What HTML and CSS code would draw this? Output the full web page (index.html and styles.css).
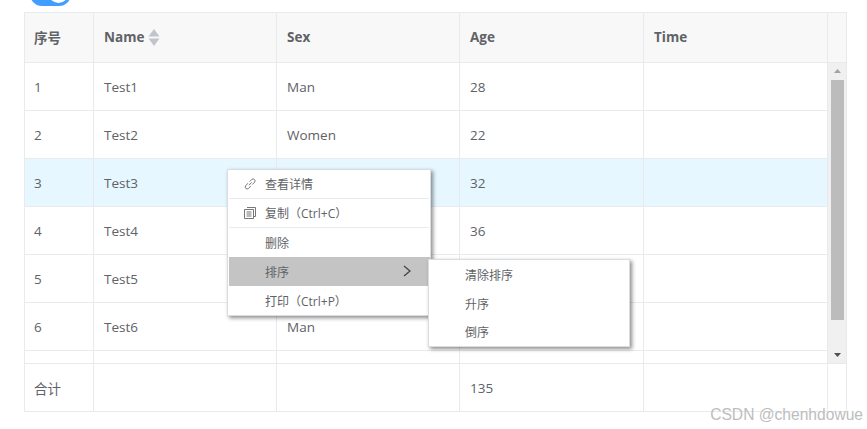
FILE: index.html
```html
<!DOCTYPE html>
<html lang="zh">
<head>
<meta charset="utf-8">
<title>Table</title>
<link rel="stylesheet" href="styles.css">
</head>
<body>
<div class="page">
  <div class="switch"><span class="knob"></span></div>
  <div class="table">
    <div class="row head">
      <div class="cell">序号</div>
      <div class="cell name">Name
        <svg class="sort" width="12" height="17" viewBox="0 0 12 17"><path d="M6 0 L11.5 7.5 H0.5 Z" fill="#c0c4cc"/><path d="M0.5 9.5 H11.5 L6 17 Z" fill="#c0c4cc"/></svg>
      </div>
      <div class="cell">Sex</div>
      <div class="cell">Age</div>
      <div class="cell">Time</div>
      <div class="cell"></div>
    </div>
    <div class="middle">
      <div class="rows">
        <div class="row data"><div class="cell">1</div><div class="cell">Test1</div><div class="cell">Man</div><div class="cell">28</div><div class="cell"></div></div>
        <div class="row data"><div class="cell">2</div><div class="cell">Test2</div><div class="cell">Women</div><div class="cell">22</div><div class="cell"></div></div>
        <div class="row data current"><div class="cell">3</div><div class="cell">Test3</div><div class="cell"></div><div class="cell">32</div><div class="cell"></div></div>
        <div class="row data"><div class="cell">4</div><div class="cell">Test4</div><div class="cell"></div><div class="cell">36</div><div class="cell"></div></div>
        <div class="row data"><div class="cell">5</div><div class="cell">Test5</div><div class="cell"></div><div class="cell"></div><div class="cell"></div></div>
        <div class="row data"><div class="cell">6</div><div class="cell">Test6</div><div class="cell">Man</div><div class="cell"></div><div class="cell"></div></div>
        <div class="row spacer"><div class="cell"></div><div class="cell"></div><div class="cell"></div><div class="cell"></div><div class="cell"></div></div>
      </div>
      <div class="scrollbar">
        <svg class="arrow" width="7" height="4" viewBox="0 0 7 4"><path d="M3.5 0 L7 4 H0 Z" fill="#a3a3a3"/></svg>
        <div class="thumb"></div>
        <svg class="arrow" width="7" height="4" viewBox="0 0 7 4"><path d="M0 0 H7 L3.5 4 Z" fill="#505050"/></svg>
      </div>
    </div>
    <div class="row foot">
      <div class="cell">合计</div><div class="cell"></div><div class="cell"></div><div class="cell">135</div><div class="cell"></div><div class="cell"></div>
    </div>
  </div>

  <div class="menu main-menu">
    <div class="item sep">
      <svg class="ico" width="14" height="14" viewBox="0 0 14 14" fill="none" stroke="#777" stroke-width="1"><path d="M6 8.2 L8.6 5.4 M5 6.2 L2.6 8.8 a2 2 0 0 0 2.9 2.7 L7.8 9 M6.6 4.6 L8.8 2.4 a2 2 0 0 1 2.9 2.7 L9.2 7.6"/></svg>
      <span>查看详情</span>
    </div>
    <div class="item sep">
      <svg class="ico" width="14" height="14" viewBox="0 0 14 14" fill="none" stroke="#777" stroke-width="1"><path d="M4 1.5 H12.5 V10.5 H10.5 M1.5 3.5 H10.5 V12.5 H1.5 Z M3.5 6 H8.5 M3.5 8 H8.5 M3.5 10 H8.5"/></svg>
      <span>复制（Ctrl+C）</span>
    </div>
    <div class="item"><span class="ico-gap"></span><span>删除</span></div>
    <div class="item active"><span class="ico-gap"></span><span>排序</span>
      <svg class="chev" width="8" height="12" viewBox="0 0 8 12" fill="none" stroke="#444" stroke-width="1.3"><path d="M1 1 L7 6 L1 11"/></svg>
    </div>
    <div class="item"><span class="ico-gap"></span><span>打印（Ctrl+P）</span></div>
  </div>

  <div class="menu sub-menu">
    <div class="item"><span>清除排序</span></div>
    <div class="item"><span>升序</span></div>
    <div class="item"><span>倒序</span></div>
  </div>

  <div class="watermark">CSDN @chenhdowue</div>
</div>
</body>
</html>
```

FILE: styles.css
```css
html, body { margin: 0; padding: 0; background: #fff; }
body {
  width: 867px;
  height: 429px;
  overflow: hidden;
  font-family: "Open Sans", "Noto Sans CJK SC", sans-serif;
  font-size: 13.5px;
  color: #606266;
}
.page { position: relative; display: flow-root; width: 867px; height: 429px; padding-left: 24px; box-sizing: border-box; }

.switch {
  width: 41px; height: 24px; margin: -18px 0 6px 6px;
  border-radius: 12px; background: #409eff; position: relative;
}
.knob { position: absolute; right: 3px; top: 2px; width: 19px; height: 19px; border-radius: 50%; background: #fff; }

.table {
  width: 823px; box-sizing: border-box;
  border: 1px solid #e8eaec;
}
.row { display: grid; grid-template-columns: 68px 183px 183px 184px 184px 19px; }
.rows .row { grid-template-columns: 68px 183px 183px 184px 184px; }
.cell {
  box-sizing: border-box; display: flex; align-items: center;
  padding-left: 10px; border-left: 1px solid #e8eaec; border-bottom: 1px solid #e8eaec;
}
.row .cell:first-child { border-left: 0; padding-left: 9px; }

.head { height: 50px; background: #f8f8f9; font-weight: 700; }
.head .cell { padding-bottom: 2px; }
.sort { margin: 2px 0 0 4px; }
.middle { display: flex; height: 301px; overflow: hidden; }
.rows { width: 802px; }
.data { height: 48px; }
.spacer { height: 13px; }
.current { background: #e6f7ff; }
.foot { height: 47px; }
.foot .cell { border-bottom: 0; }

.scrollbar {
  width: 19px; box-sizing: border-box; border-left: 1px solid #e8eaec;
  background: #f0f0f0; display: flex; flex-direction: column; align-items: center;
  padding: 6px 0 6px; border-bottom: 1px solid #e8eaec;
}
.arrow { flex: none; }
.thumb { width: 13px; height: 240px; background: #bcbcbc; margin: 7px 0 auto; }

.menu {
  position: absolute; box-sizing: border-box; background: #fff;
  border: 1px solid #dadce0; box-shadow: 2px 2px 4px rgba(0,0,0,.45);
  font-size: 12px; color: #606266;
}
.main-menu { left: 227px; top: 169px; width: 204px; height: 147px; padding: 0 1px; }
.sub-menu { left: 428px; top: 259px; width: 202px; height: 88px; padding-top: 1px; }
.item { display: flex; align-items: center; height: 29px; padding-left: 14px; position: relative; }
.sep { border-bottom: 1px solid #e8eaec; box-sizing: border-box; }
.ico { flex: none; width: 14px; margin-right: 8px; }
.ico-gap { flex: none; width: 22px; }
.active { background: #c4c4c4; margin-right: -1px; }
.chev { position: absolute; right: 19px; top: 8px; }
.sub-menu .item { padding-left: 36px; height: 28.5px; }

.watermark {
  position: absolute; right: 4px; bottom: 5px;
  font-family: "Liberation Sans", sans-serif; font-size: 15.6px; color: #bdbdbd;
}
```
